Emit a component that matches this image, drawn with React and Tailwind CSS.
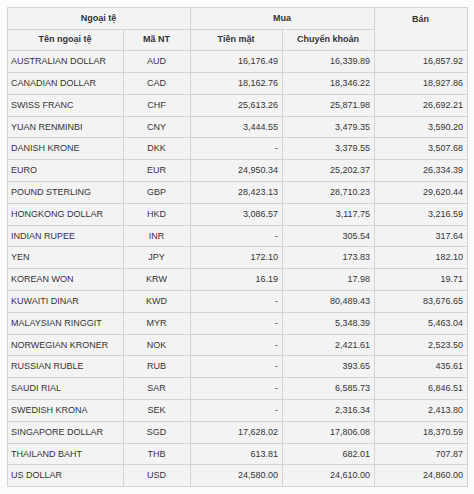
import React from "react";

const rows = [
  ["AUSTRALIAN DOLLAR", "AUD", "16,176.49", "16,339.89", "16,857.92"],
  ["CANADIAN DOLLAR", "CAD", "18,162.76", "18,346.22", "18,927.86"],
  ["SWISS FRANC", "CHF", "25,613.26", "25,871.98", "26,692.21"],
  ["YUAN RENMINBI", "CNY", "3,444.55", "3,479.35", "3,590.20"],
  ["DANISH KRONE", "DKK", "-", "3,379.55", "3,507.68"],
  ["EURO", "EUR", "24,950.34", "25,202.37", "26,334.39"],
  ["POUND STERLING", "GBP", "28,423.13", "28,710.23", "29,620.44"],
  ["HONGKONG DOLLAR", "HKD", "3,086.57", "3,117.75", "3,216.59"],
  ["INDIAN RUPEE", "INR", "-", "305.54", "317.64"],
  ["YEN", "JPY", "172.10", "173.83", "182.10"],
  ["KOREAN WON", "KRW", "16.19", "17.98", "19.71"],
  ["KUWAITI DINAR", "KWD", "-", "80,489.43", "83,676.65"],
  ["MALAYSIAN RINGGIT", "MYR", "-", "5,348.39", "5,463.04"],
  ["NORWEGIAN KRONER", "NOK", "-", "2,421.61", "2,523.50"],
  ["RUSSIAN RUBLE", "RUB", "-", "393.65", "435.61"],
  ["SAUDI RIAL", "SAR", "-", "6,585.73", "6,846.51"],
  ["SWEDISH KRONA", "SEK", "-", "2,316.34", "2,413.80"],
  ["SINGAPORE DOLLAR", "SGD", "17,628.02", "17,806.08", "18,370.59"],
  ["THAILAND BAHT", "THB", "613.81", "682.01", "707.87"],
  ["US DOLLAR", "USD", "24,580.00", "24,610.00", "24,860.00"],
];

const cell = "border border-[#d4d4d4] pl-[3px] pr-[4px] leading-none";

export default function App() {
  return (
    <div className="w-[474px] h-[494px] bg-[#fbfbfb] p-[7px] font-['Liberation_Sans',Arial,sans-serif] text-[9px] text-[#333]">
      <table className="w-[460px] table-fixed border-collapse bg-[#f3f3f3]">
        <colgroup>
          <col className="w-[116px]" />
          <col className="w-[67px]" />
          <col className="w-[92px]" />
          <col className="w-[92px]" />
          <col className="w-[93px]" />
        </colgroup>
        <thead>
          <tr className="h-[21.5px]">
            <th colSpan={2} className={`${cell} font-bold text-center`}>
              Ngoại tệ
            </th>
            <th colSpan={2} className={`${cell} font-bold text-center`}>
              Mua
            </th>
            <th rowSpan={2} className={`${cell} font-bold text-center align-top pt-[7px]`}>
              Bán
            </th>
          </tr>
          <tr className="h-[21.8px]">
            <th className={`${cell} font-bold text-center`}>Tên ngoại tệ</th>
            <th className={`${cell} font-bold text-center`}>Mã NT</th>
            <th className={`${cell} font-bold text-center`}>Tiền mặt</th>
            <th className={`${cell} font-bold text-center`}>Chuyển khoản</th>
          </tr>
        </thead>
        <tbody>
          {rows.map((r) => (
            <tr key={r[1]} className="h-[21.8px]">
              <td className={`${cell} text-left`}>{r[0]}</td>
              <td className={`${cell} text-center`}>{r[1]}</td>
              <td className={`${cell} text-right`}>{r[2]}</td>
              <td className={`${cell} text-right`}>{r[3]}</td>
              <td className={`${cell} text-right`}>{r[4]}</td>
            </tr>
          ))}
        </tbody>
      </table>
    </div>
  );
}
